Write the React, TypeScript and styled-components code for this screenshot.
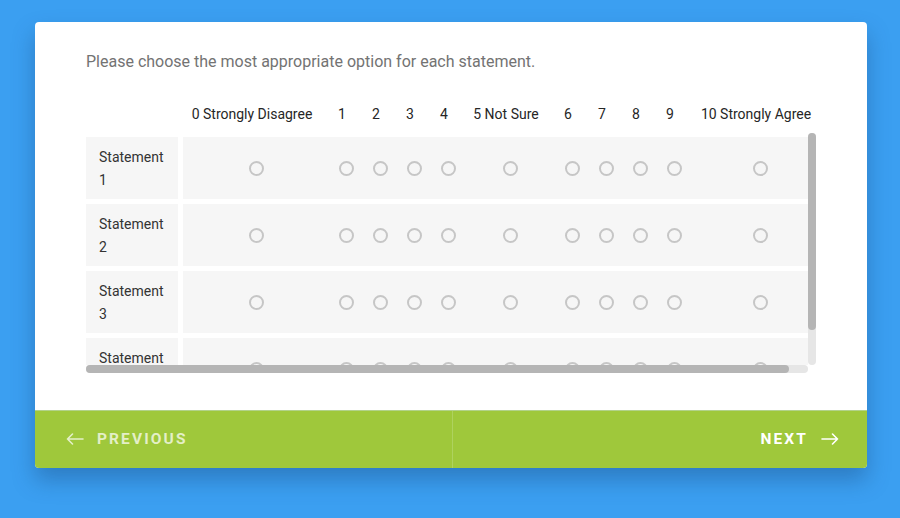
import React from "react";
import styled, { createGlobalStyle } from "styled-components";

const GlobalStyle = createGlobalStyle`
  html, body {
    margin: 0;
    padding: 0;
    background: #3b9ff1;
  }
  body {
    font-family: Roboto, "Noto Sans", "Liberation Sans", sans-serif;
  }
`;

const columns = [
  { label: "0 Strongly Disagree", width: 146 },
  { label: "1", width: 34 },
  { label: "2", width: 34 },
  { label: "3", width: 34 },
  { label: "4", width: 34 },
  { label: "5 Not Sure", width: 90 },
  { label: "6", width: 34 },
  { label: "7", width: 34 },
  { label: "8", width: 34 },
  { label: "9", width: 34 },
  { label: "10 Strongly Agree", width: 138 },
];

const statements = ["Statement 1", "Statement 2", "Statement 3", "Statement 4"];

const template = columns.map((c) => `${c.width}px`).join(" ");

export default function App() {
  return (
    <>
      <GlobalStyle />
      <Page>
        <Card>
          <Body>
            <Question>Please choose the most appropriate option for each statement.</Question>
            <HeaderRow>
              <Corner />
              <HeaderCells>
                {columns.map((c) => (
                  <HeaderLabel key={c.label}>{c.label}</HeaderLabel>
                ))}
              </HeaderCells>
            </HeaderRow>
            <ScrollArea>
              <Viewport>
                <Rows>
                  {statements.map((s) => (
                    <Row key={s}>
                      <StatementCell>{s}</StatementCell>
                      <OptionCells>
                        {columns.map((c) => (
                          <OptionCell key={c.label}>
                            <Radio />
                          </OptionCell>
                        ))}
                      </OptionCells>
                    </Row>
                  ))}
                </Rows>
              </Viewport>
              <VTrack>
                <VThumb />
              </VTrack>
              <HTrack>
                <HThumb />
              </HTrack>
            </ScrollArea>
          </Body>
          <Footer>
            <NavButton $side="left">
              <Arrow viewBox="0 0 18 12">
                <path d="M17 6H1.5M6.5 1L1.5 6l5 5" />
              </Arrow>
              PREVIOUS
            </NavButton>
            <NavButton $side="right">
              NEXT
              <Arrow viewBox="0 0 18 12">
                <path d="M1 6h15.5M11.5 1l5 5-5 5" />
              </Arrow>
            </NavButton>
          </Footer>
        </Card>
      </Page>
    </>
  );
}

const Page = styled.div`
  width: 900px;
  height: 518px;
  padding: 22px 33px 0 35px;
  box-sizing: border-box;
  overflow: hidden;
`;

const Card = styled.div`
  width: 832px;
  background: #fff;
  border-radius: 4px;
  overflow: hidden;
  box-shadow: 0 12px 22px rgba(20, 60, 110, 0.35);
`;

const Body = styled.div`
  padding: 30px 51px 0 51px;
  height: 388px;
  box-sizing: border-box;
`;

const Question = styled.div`
  font-size: 16px;
  line-height: 20px;
  color: #737373;
  height: 20px;
  margin-bottom: 29px;
`;

const HeaderRow = styled.div`
  display: flex;
  height: 32px;
  width: 730px;
  overflow: hidden;
`;

const Corner = styled.div`
  flex: 0 0 93px;
`;

const HeaderCells = styled.div`
  display: grid;
  grid-template-columns: ${template};
  flex: none;
  align-items: start;
`;

const HeaderLabel = styled.div`
  text-align: center;
  font-size: 14px;
  line-height: 26px;
  color: #262626;
  white-space: nowrap;
`;

const ScrollArea = styled.div`
  display: grid;
  grid-template-columns: 722px 8px;
  grid-template-rows: 232px 8px;
  width: 730px;
`;

const Viewport = styled.div`
  overflow: hidden;
`;

const VTrack = styled.div`
  background: #e6e6e6;
  border-radius: 4px;
  display: flex;
  flex-direction: column;
`;

const VThumb = styled.div`
  height: 197px;
  background: #b5b5b5;
  border-radius: 4px;
`;

const HTrack = styled.div`
  background: #e6e6e6;
  border-radius: 4px;
  display: flex;
`;

const HThumb = styled.div`
  width: 703px;
  background: #b5b5b5;
  border-radius: 4px;
`;

const Rows = styled.div`
  display: flex;
  flex-direction: column;
  gap: 5px;
  padding-top: 4px;
  width: max-content;
`;

const Row = styled.div`
  display: flex;
  gap: 5px;
  height: 62px;
  flex: none;
`;

const StatementCell = styled.div`
  width: 92px;
  box-sizing: border-box;
  padding: 2px 10px 0 13px;
  background: #f6f6f6;
  font-size: 14px;
  line-height: 23px;
  color: #333;
  display: flex;
  align-items: center;
`;

const OptionCells = styled.div`
  display: grid;
  grid-template-columns: ${template};
  background: #f6f6f6;
`;

const OptionCell = styled.div`
  display: flex;
  align-items: center;
  justify-content: center;
`;

const Radio = styled.span`
  width: 15px;
  height: 15px;
  box-sizing: border-box;
  border: 2px solid #c6c6c6;
  border-radius: 50%;
`;

const Footer = styled.div`
  display: flex;
  height: 58px;
  background: #9fc83b;
  border-top: 1px solid #b2d28a;
  box-sizing: border-box;
`;

const NavButton = styled.div<{ $side: "left" | "right" }>`
  flex: 1;
  display: flex;
  align-items: center;
  justify-content: ${({ $side }) => ($side === "left" ? "flex-start" : "flex-end")};
  gap: 13px;
  padding: ${({ $side }) => ($side === "left" ? "0 0 1px 31px" : "0 28px 1px 0")};
  font-size: 15.5px;
  font-weight: 700;
  letter-spacing: 2.1px;
  color: ${({ $side }) => ($side === "left" ? "rgba(255,255,255,0.72)" : "#fff")};
  ${({ $side }) => ($side === "left" ? "border-right: 1px solid #aed25e;" : "")}
`;

const Arrow = styled.svg`
  width: 18px;
  height: 12px;
  fill: none;
  stroke: currentColor;
  stroke-width: 1.6;
  stroke-linecap: round;
  stroke-linejoin: round;
`;
